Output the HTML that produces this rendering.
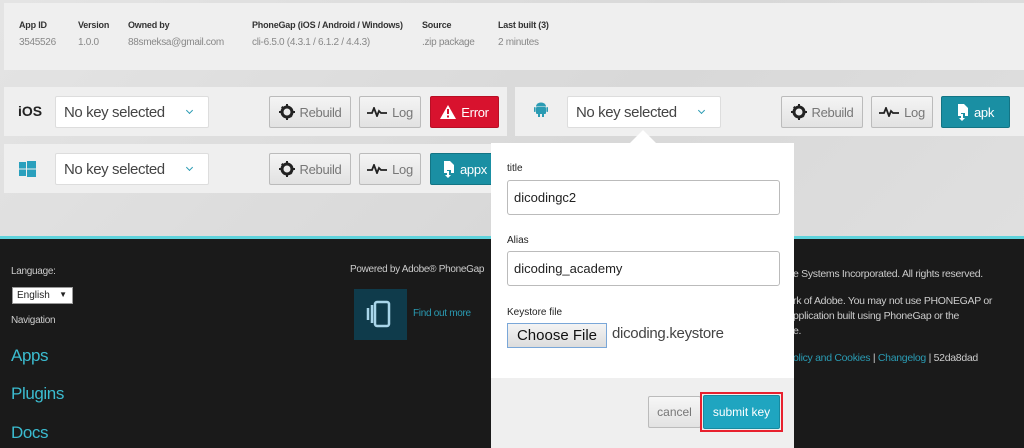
<!DOCTYPE html>
<html><head><meta charset="utf-8"><style>
*{margin:0;padding:0;box-sizing:border-box}
body{width:1024px;height:448px;overflow:hidden;position:relative;font-family:"Liberation Sans",sans-serif;background:linear-gradient(135deg,#e4e4e4,#d8d8d8 50%,#e2e2e2);}
.abs{position:absolute}
.panel{position:absolute;background:#efefef}
.lbl{position:absolute;font-size:9px;color:#333;font-weight:bold;letter-spacing:-0.2px}
.val{position:absolute;font-size:10px;color:#888;letter-spacing:-0.3px}
.sel{position:absolute;background:#fff;border:1px solid #ddd;border-radius:2px;height:32px;width:154px;font-size:15px;color:#444;padding:7px 8px;letter-spacing:-0.4px}
.sel:after{content:"";position:absolute;right:16px;top:11px;width:4px;height:4px;border-right:1.5px solid #2a9bb3;border-bottom:1.5px solid #2a9bb3;transform:rotate(45deg)}
.btn{position:absolute;height:32px;border:1px solid #bbb;border-radius:2px;background:linear-gradient(#f4f4f4,#e2e2e2);font-size:13px;color:#777;display:flex;align-items:center;justify-content:center;gap:5px;letter-spacing:-0.3px}
.btn svg{flex:none}
.red{background:#d8122e;border-color:#b80f25;color:#fff}
.teal{background:#1a8fa3;border-color:#137484;color:#fff}
.inp{position:absolute;left:507px;width:273px;height:35px;border:1px solid #bbb;border-radius:3px;background:#fff;font-size:13px;color:#222;padding:9px 6px}
.fl{position:absolute;left:507px;font-size:10px;color:#222}
.ft{position:absolute;color:#ccc;font-size:10px;letter-spacing:-0.3px;white-space:nowrap}
.nav{position:absolute;left:11px;color:#3bbcd0;font-size:17px;letter-spacing:-0.4px}
</style></head><body>
<div class="panel" style="left:4px;top:3px;width:1020px;height:67px"></div>
<div class="lbl" style="left:19px;top:20px">App ID</div><div class="val" style="left:19px;top:37px">3545526</div>
<div class="lbl" style="left:78px;top:20px">Version</div><div class="val" style="left:78px;top:37px">1.0.0</div>
<div class="lbl" style="left:128px;top:20px">Owned by</div><div class="val" style="left:128px;top:37px">88smeksa@gmail.com</div>
<div class="lbl" style="left:252px;top:20px">PhoneGap (iOS / Android / Windows)</div><div class="val" style="left:252px;top:37px">cli-6.5.0 (4.3.1 / 6.1.2 / 4.4.3)</div>
<div class="lbl" style="left:422px;top:20px">Source</div><div class="val" style="left:422px;top:37px">.zip package</div>
<div class="lbl" style="left:498px;top:20px">Last built (3)</div><div class="val" style="left:498px;top:37px">2 minutes</div>

<div class="panel" style="left:4px;top:87px;width:503px;height:49px"></div>
<div class="panel" style="left:515px;top:87px;width:509px;height:49px"></div>
<div class="panel" style="left:4px;top:144px;width:503px;height:49px"></div>

<div class="abs" style="left:18px;top:103px;font-size:14px;font-weight:bold;color:#222">iOS</div>
<div class="sel" style="left:55px;top:96px">No key selected</div>
<div class="sel" style="left:55px;top:153px">No key selected</div>
<div class="sel" style="left:567px;top:96px">No key selected</div>
<svg class="abs" style="left:19px;top:161px" width="17" height="16"><rect x="0" y="1" width="7" height="6.5" fill="#2aa0bd"/><rect x="8" y="0" width="9" height="7.5" fill="#2aa0bd"/><rect x="0" y="8.5" width="7" height="6.5" fill="#2aa0bd"/><rect x="8" y="8.5" width="9" height="7.5" fill="#2aa0bd"/></svg>
<svg class="abs" style="left:534px;top:102px" width="14" height="16"><rect x="2" y="5" width="10" height="7" rx="1" fill="#2a9bb3"/><path d="M2 4.5a5 4 0 0 1 10 0z" fill="#2a9bb3"/><rect x="0" y="5" width="1.6" height="5" rx=".8" fill="#2a9bb3"/><rect x="12.4" y="5" width="1.6" height="5" rx=".8" fill="#2a9bb3"/><rect x="4" y="11" width="2" height="4" fill="#2a9bb3"/><rect x="8" y="11" width="2" height="4" fill="#2a9bb3"/></svg>

<div class="btn" style="left:269px;top:96px;width:82px"><svg width="16" height="16" viewBox="0 0 16 16"><circle cx="8" cy="8" r="5" fill="none" stroke="#222" stroke-width="3"/><path d="M7 0h2v3H7zM7 13h2v3H7zM0 7h3v2H0zM13 7h3v2h-3zM2 3.5l1.5-1.5 2 2-1.5 1.5zM12 10.5l1.5 1.5-1.5 1.5-2-2z" fill="#222"/></svg>Rebuild</div>
<div class="btn" style="left:359px;top:96px;width:62px"><svg width="20" height="10"><path d="M0 6h5l2-5 3 8 2-5 2 2h6" fill="none" stroke="#222" stroke-width="1.8"/></svg>Log</div>
<div class="btn red" style="left:430px;top:96px;width:69px"><svg width="16" height="14"><path d="M8 0L16 14H0z" fill="#fff"/><rect x="7" y="4" width="2" height="5" fill="#d8122e"/><rect x="7" y="10.5" width="2" height="2" fill="#d8122e"/></svg>Error</div>
<div class="btn" style="left:269px;top:153px;width:82px"><svg width="16" height="16" viewBox="0 0 16 16"><circle cx="8" cy="8" r="5" fill="none" stroke="#222" stroke-width="3"/><path d="M7 0h2v3H7zM7 13h2v3H7zM0 7h3v2H0zM13 7h3v2h-3zM2 3.5l1.5-1.5 2 2-1.5 1.5zM12 10.5l1.5 1.5-1.5 1.5-2-2z" fill="#222"/></svg>Rebuild</div>
<div class="btn" style="left:359px;top:153px;width:62px"><svg width="20" height="10"><path d="M0 6h5l2-5 3 8 2-5 2 2h6" fill="none" stroke="#222" stroke-width="1.8"/></svg>Log</div>
<div class="btn teal" style="left:430px;top:153px;width:66px;justify-content:flex-start;padding-left:12px"><svg width="12" height="17"><path d="M1 0h6l4 4v8H8V9H4v3H1z" fill="#fff"/><path d="M4 10h2v4h2l-3 3-3-3h2z" fill="#fff"/></svg>appx</div>
<div class="btn" style="left:781px;top:96px;width:82px"><svg width="16" height="16" viewBox="0 0 16 16"><circle cx="8" cy="8" r="5" fill="none" stroke="#222" stroke-width="3"/><path d="M7 0h2v3H7zM7 13h2v3H7zM0 7h3v2H0zM13 7h3v2h-3zM2 3.5l1.5-1.5 2 2-1.5 1.5zM12 10.5l1.5 1.5-1.5 1.5-2-2z" fill="#222"/></svg>Rebuild</div>
<div class="btn" style="left:871px;top:96px;width:62px"><svg width="20" height="10"><path d="M0 6h5l2-5 3 8 2-5 2 2h6" fill="none" stroke="#222" stroke-width="1.8"/></svg>Log</div>
<div class="btn teal" style="left:941px;top:96px;width:69px"><svg width="12" height="17"><path d="M1 0h6l4 4v8H8V9H4v3H1z" fill="#fff"/><path d="M4 10h2v4h2l-3 3-3-3h2z" fill="#fff"/></svg>apk</div>

<div class="abs" style="left:0;top:236px;width:1024px;height:3px;background:#5fd3dc"></div>
<div class="abs" style="left:0;top:239px;width:1024px;height:209px;background:#1a1a1a"></div>
<div class="ft" style="left:11px;top:266px">Language:</div>
<div class="abs" style="left:12px;top:287px;width:61px;height:17px;background:#fff;border:1px solid #999;font-size:10px;color:#222;padding:2px 4px">English<span style="position:absolute;right:5px;font-size:8px">▼</span></div>
<div class="ft" style="left:11px;top:315px">Navigation</div>
<div class="nav" style="top:346px">Apps</div>
<div class="nav" style="top:384px">Plugins</div>
<div class="nav" style="top:423px">Docs</div>
<div class="ft" style="left:350px;top:264px">Powered by Adobe® PhoneGap</div>
<div class="abs" style="left:354px;top:289px;width:53px;height:51px;background:#0f3b4b"><svg width="53" height="51"><g fill="none" stroke="#a9d6ea" stroke-width="2.5"><rect x="21" y="13" width="14" height="24" rx="2"/><path d="M18 16v18M14 19v12"/></g></svg></div>
<div class="ft" style="left:413px;top:308px;color:#2a9bb3">Find out more</div>
<div class="ft" style="left:793px;top:268px;font-size:10.5px">e Systems Incorporated. All rights reserved.</div>
<div class="ft" style="left:793px;top:295px;font-size:10.5px">rk of Adobe. You may not use PHONEGAP or</div>
<div class="ft" style="left:793px;top:310px;font-size:10.5px">pplication built using PhoneGap or the</div>
<div class="ft" style="left:793px;top:325px;font-size:10.5px">e.</div>
<div class="ft" style="left:793px;top:352px;font-size:10.5px"><span style="color:#2a9bb3">olicy and Cookies</span> | <span style="color:#2a9bb3">Changelog</span> | 52da8dad</div>

<div class="abs" style="left:491px;top:143px;width:303px;height:305px;background:#fff"></div>
<div class="abs" style="left:629px;top:130px;width:0;height:0;border-left:14px solid transparent;border-right:14px solid transparent;border-bottom:14px solid #fff"></div>
<div class="abs" style="left:491px;top:378px;width:303px;height:70px;background:#efefef"></div>
<div class="fl" style="top:163px">title</div>
<div class="inp" style="top:180px">dicodingc2</div>
<div class="fl" style="top:235px">Alias</div>
<div class="inp" style="top:251px">dicoding_academy</div>
<div class="fl" style="top:307px">Keystore file</div>
<div class="abs" style="left:507px;top:323px;width:100px;height:25px;border:1px solid #7aa7d8;background:linear-gradient(#f4f4f4,#ddd);font-size:15px;color:#111;text-align:center;line-height:23px">Choose File</div>
<div class="abs" style="left:612px;top:325px;font-size:15px;color:#444;letter-spacing:-0.3px">dicoding.keystore</div>
<div class="abs" style="left:648px;top:396px;width:53px;height:32px;border:1px solid #bbb;border-radius:2px;background:linear-gradient(#f6f6f6,#e2e2e2);font-size:12px;color:#777;text-align:center;line-height:30px">cancel</div>
<div class="abs" style="left:700px;top:392px;width:83px;height:40px;border:2px solid #e8202e"></div>
<div class="abs" style="left:703px;top:395px;width:77px;height:34px;background:#1fa5c0;border:1px solid #178aa0;border-radius:2px;font-size:12px;color:#fff;text-align:center;line-height:32px">submit key</div>
</body></html>
